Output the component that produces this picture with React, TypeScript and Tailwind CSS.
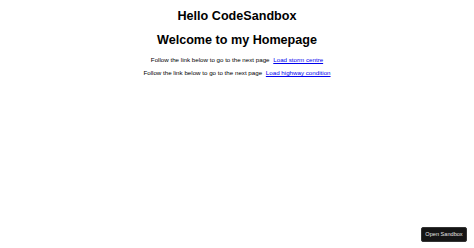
import React from 'react';

const links = ['Load storm centre', 'Load highway condition'];

const App = () => {
  return (
    <div className="relative min-h-screen bg-white text-center text-black font-['Liberation_Sans',Arial,sans-serif]">
      <div className="pt-[9px]">
        <h1 className="text-[12.6px] font-bold leading-[15px]">Hello CodeSandbox</h1>
        <h1 className="mt-[9px] text-[12.6px] font-bold leading-[15px]">Welcome to my Homepage</h1>
        <div className="mt-[8px] flex flex-col gap-[5px] text-[6.2px] leading-[8px]">
          {links.map((label) => (
            <p key={label}>
              Follow the link below to go to the next page{' '}
              <a href="#" className="ml-[2px] text-[#0000ee] underline">
                {label}
              </a>
            </p>
          ))}
        </div>
      </div>

      {/* CodeSandbox badge */}
      <button className="absolute bottom-[6px] right-[7px] h-[15px] w-[46px] rounded-[2px] border border-[#333] bg-[#151515] text-[5.6px] text-[#e5e5e5]">
        Open Sandbox
      </button>
    </div>
  );
};

export default App;
